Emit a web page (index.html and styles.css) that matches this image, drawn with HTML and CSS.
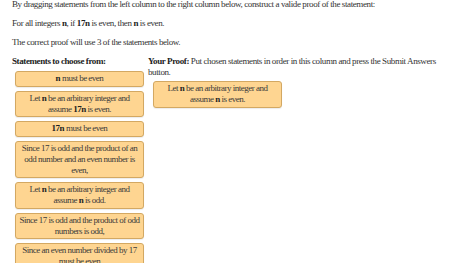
FILE: index.html
```html
<!DOCTYPE html>
<html lang="en">
<head>
    <meta charset="UTF-8">
    <title>Proof</title>
    <link rel="stylesheet" href="styles.css">
</head>
<body>
    <div class="question">
        <p>By dragging statements from the left column to the right column below, construct a valide proof of the statement:</p>
        <p>For all integers <b>n</b>, if <b>17n</b> is even, then <b>n</b> is even.</p>
        <p>The correct proof will use 3 of the statements below.</p>

        <div class="columns">
            <div class="left-column">
                <div class="col-title"><b>Statements to choose from:</b></div>
                <div class="choice-list">
                    <div class="choice"><b>n</b> must be even</div>
                    <div class="choice">Let <b>n</b> be an arbitrary integer and assume <b>17n</b> is even.</div>
                    <div class="choice"><b>17n</b> must be even</div>
                    <div class="choice">Since 17 is odd and the product of an odd number and an even number is even,</div>
                    <div class="choice">Let <b>n</b> be an arbitrary integer and assume <b>n</b> is odd.</div>
                    <div class="choice">Since 17 is odd and the product of odd numbers is odd,</div>
                    <div class="choice">Since an even number divided by 17 must be even</div>
                </div>
            </div>

            <div class="right-column">
                <div class="col-title"><b>Your Proof:</b> Put chosen statements in order in this column and press the Submit Answers button.</div>
                <div class="choice-list proof-list">
                    <div class="choice">Let <b>n</b> be an arbitrary integer and assume <b>n</b> is even.</div>
                </div>
            </div>
        </div>
    </div>
</body>
</html>
```

FILE: styles.css
```css
body {
    margin: 0;
    padding: 0 12px;
    background-color: #fff;
    color: #333;
    font-family: 'Liberation Serif', 'Times New Roman', serif;
    font-size: 9px;
    line-height: 11px;
    letter-spacing: -0.4px;
}

.question {
    margin-top: -1px;
}

.question p {
    margin: 0 0 8px 0;
}

b {
    color: #222;
}

.columns {
    display: flex;
}

.left-column {
    width: 136px;
    flex-shrink: 0;
}

.right-column {
    flex: 1;
    padding-right: 18px;
}

.col-title {
    margin-bottom: 4px;
}

.choice-list {
    display: flex;
    flex-direction: column;
    gap: 4px;
    padding-left: 3px;
    width: 129px;
}

.proof-list {
    margin-top: -1px;
    padding-left: 5px;
}

.choice {
    background-color: #fed591;
    border: 1px solid #d3a862;
    border-radius: 3px;
    padding: 1px 1px 1.5px;
    text-align: center;
    color: #3a3a3a;
    letter-spacing: -0.5px;
    box-shadow: 0 1px 1px rgba(0, 0, 0, 0.08);
}
```
